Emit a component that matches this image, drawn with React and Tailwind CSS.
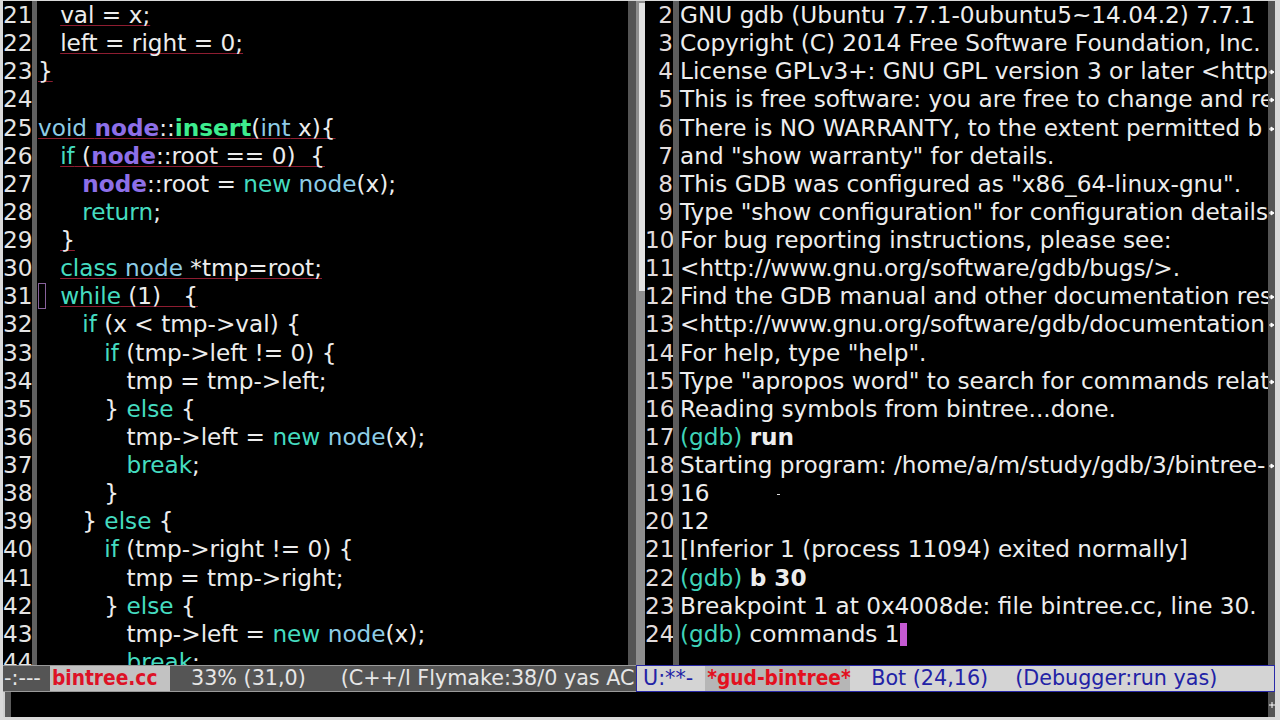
const KW = "text-[#45dcc0]";
const TY = "text-[#8dcce6]";
const NS = "font-bold text-[#8d6fe8]";
const FN = "font-bold text-[#3ded8e]";
const PR = "text-[#3fd3b9]";

// left window: bintree.cc
const code = [
  { n: 21, ind: 1, ul: true, t: [["val = x;"]] },
  { n: 22, ind: 1, ul: true, t: [["left = right = 0;"]] },
  { n: 23, ind: 0, ul: true, t: [["}"]] },
  { n: 24, t: [] },
  { n: 25, ind: 0, ul: true, t: [["void", TY], [" "], ["node", NS], ["::"], ["insert", FN], ["("], ["int", TY], [" x){"]] },
  { n: 26, ind: 1, ul: true, t: [["if", KW], [" ("], ["node", NS], ["::root == 0)  {"]] },
  { n: 27, ind: 2, t: [["node", NS], ["::root = "], ["new", KW], [" "], ["node", TY], ["(x);"]] },
  { n: 28, ind: 2, t: [["return", KW], [";"]] },
  { n: 29, ind: 1, ul: true, t: [["}"]] },
  { n: 30, ind: 1, ul: true, t: [["class", KW], [" "], ["node", TY], [" *tmp=root;"]] },
  { n: 31, ind: 1, ul: true, cursor: true, t: [["while", KW], [" (1)   {"]] },
  { n: 32, ind: 2, t: [["if", KW], [" (x < tmp->val) {"]] },
  { n: 33, ind: 3, t: [["if", KW], [" (tmp->left != 0) {"]] },
  { n: 34, ind: 4, t: [["tmp = tmp->left;"]] },
  { n: 35, ind: 3, t: [["} "], ["else", KW], [" {"]] },
  { n: 36, ind: 4, t: [["tmp->left = "], ["new", KW], [" "], ["node", TY], ["(x);"]] },
  { n: 37, ind: 4, t: [["break", KW], [";"]] },
  { n: 38, ind: 3, t: [["}"]] },
  { n: 39, ind: 2, t: [["} "], ["else", KW], [" {"]] },
  { n: 40, ind: 3, t: [["if", KW], [" (tmp->right != 0) {"]] },
  { n: 41, ind: 4, t: [["tmp = tmp->right;"]] },
  { n: 42, ind: 3, t: [["} "], ["else", KW], [" {"]] },
  { n: 43, ind: 4, t: [["tmp->left = "], ["new", KW], [" "], ["node", TY], ["(x);"]] },
  { n: 44, ind: 4, t: [["break", KW], [";"]] },
];

// right window: *gud-bintree*
const gdb = [
  { n: 2, t: [["GNU gdb (Ubuntu 7.7.1-0ubuntu5~14.04.2) 7.7.1"]] },
  { n: 3, t: [["Copyright (C) 2014 Free Software Foundation, Inc."]] },
  { n: 4, cut: true, t: [["License GPLv3+: GNU GPL version 3 or later <http"]] },
  { n: 5, cut: true, t: [["This is free software: you are free to change and re"]] },
  { n: 6, cut: true, t: [["There is NO WARRANTY, to the extent permitted b"]] },
  { n: 7, t: [['and "show warranty" for details.']] },
  { n: 8, t: [['This GDB was configured as "x86_64-linux-gnu".']] },
  { n: 9, cut: true, t: [['Type "show configuration" for configuration details']] },
  { n: 10, t: [["For bug reporting instructions, please see:"]] },
  { n: 11, t: [["<http://www.gnu.org/software/gdb/bugs/>."]] },
  { n: 12, cut: true, t: [["Find the GDB manual and other documentation res"]] },
  { n: 13, cut: true, t: [["<http://www.gnu.org/software/gdb/documentation"]] },
  { n: 14, t: [['For help, type "help".']] },
  { n: 15, cut: true, t: [['Type "apropos word" to search for commands relat']] },
  { n: 16, t: [["Reading symbols from bintree...done."]] },
  { n: 17, t: [["(gdb)", PR], [" "], ["run", "font-bold"]] },
  { n: 18, cut: true, t: [["Starting program: /home/a/m/study/gdb/3/bintree-"]] },
  { n: 19, speck: true, t: [["16"]] },
  { n: 20, t: [["12"]] },
  { n: 21, t: [["[Inferior 1 (process 11094) exited normally]"]] },
  { n: 22, t: [["(gdb)", PR], [" "], ["b 30", "font-bold"]] },
  { n: 23, t: [["Breakpoint 1 at 0x4008de: file bintree.cc, line 30."]] },
  { n: 24, cursor: true, t: [["(gdb)", PR], [" commands 1"]] },
  { n: "", t: [] },
];

function Segs({ t }) {
  return t.map(([s, c], i) => (
    <span key={i} className={c}>
      {s}
    </span>
  ));
}

function CodeLine({ line }) {
  const indent = "   ".repeat(line.ind || 0);
  return (
    <div className="relative h-[28.14px] whitespace-pre">
      {line.cursor && (
        <span className="absolute left-0 top-[1px] h-[26px] w-[8px] border border-[#87619b]" />
      )}
      {indent}
      <span
        className={
          line.ul
            ? "underline decoration-[#8e1d31] decoration-1 underline-offset-[2px] [text-decoration-skip-ink:none]"
            : ""
        }
      >
        <Segs t={line.t} />
      </span>
    </div>
  );
}

function Arrow() {
  return (
    <svg width="6" height="6" viewBox="0 0 6 6" className="mt-[12px]">
      <path d="M0 3 H3 M2 1 L5 3 L2 5 Z" stroke="#ffffff" strokeWidth="1" fill="#ffffff" />
    </svg>
  );
}

export default function App() {
  return (
    <div className="flex h-[720px] w-[1280px] flex-col overflow-hidden bg-[#d9d9d9] pb-[3px] pl-[3px] pr-[5px] pt-[1px] font-['DejaVu_Sans',sans-serif] text-[23.2px] leading-[28px] text-[#ededed]">
      {/* windows */}
      <div className="flex h-[664px] overflow-hidden bg-black">
        {/* left window */}
        <div className="flex w-[642px] shrink-0">
          <div className="w-[29px] shrink-0 text-right text-[#e4e4e4]">
            {code.map((l) => (
              <div key={l.n} className="h-[28.14px]">{l.n}</div>
            ))}
          </div>
          <div className="w-[5px] shrink-0 bg-[#606060]" />
          <div className="min-w-0 flex-1 overflow-hidden pl-[1px]">
            {code.map((l) => (
              <CodeLine key={l.n} line={l} />
            ))}
          </div>
          <div className="w-[8px] shrink-0 bg-[#545454]" />
          <div className="w-[9px] shrink-0 bg-[#8e8e8e]">
            <div className="ml-[3px] mt-[2px] h-[288px] bg-[#e2e2e2]" />
          </div>
        </div>

        {/* right window */}
        <div className="flex min-w-0 flex-1">
          <div className="w-[28px] shrink-0 text-right text-[#e2dcdc]">
            {gdb.map((l, i) => (
              <div key={i} className="h-[28.14px]">{l.n}</div>
            ))}
          </div>
          <div className="w-[6px] shrink-0 bg-[#5c5c5c]" />
          <div className="min-w-0 flex-1 overflow-hidden pl-[1px]">
            {gdb.map((l, i) => (
              <div key={i} className="h-[28.14px] whitespace-pre">
                <Segs t={l.t} />
                {l.speck && (
                  <span className="ml-[67px] inline-block h-[1px] w-[3px] bg-[#dddddd] align-middle" />
                )}
                {l.cursor && (
                  <span className="inline-block h-[23px] w-[7px] bg-[#c45ad2] align-[-4px]" />
                )}
              </div>
            ))}
          </div>
          <div className="w-[7px] shrink-0 bg-[#545454]">
            {gdb.map((l, i) => (
              <div key={i} className="flex h-[28.14px] justify-center">
                {l.cut && <Arrow />}
              </div>
            ))}
          </div>
        </div>
      </div>

      {/* mode lines */}
      <div className="flex h-[27px] text-[20.7px] leading-[25px]">
        <div className="flex w-[633px] shrink-0 items-center overflow-hidden whitespace-pre border-y border-[#9a9a9a] bg-[#555555] text-[#e6e6e6]">
          <span className="w-[47px] shrink-0 pl-[1px]">-:---</span>
          <span className="w-[120px] shrink-0 bg-[#c2c2c2] pl-[2px] font-['DejaVu_Sans_Condensed','DejaVu_Sans',sans-serif] font-bold text-[#dd1226]">
            bintree.cc
          </span>
          <span className="ml-[21px] shrink-0">33% (31,0)</span>
          <span className="ml-[35px] shrink-0">(C++/l Flymake:38/0 yas AC</span>
        </div>
        <div className="flex min-w-0 flex-1 items-center overflow-hidden whitespace-pre border border-[#2a2aa8] bg-[#d4d4d4] text-[#2222a6]">
          <span className="shrink-0 pl-[6px]">U:**-</span>
          <span className="ml-[12px] w-[145px] shrink-0 bg-[#b6b6b6] pl-[2px] font-['DejaVu_Sans_Condensed','DejaVu_Sans',sans-serif] font-bold text-[#e3101e]">
            *gud-bintree*
          </span>
          <span className="ml-[21px] shrink-0">Bot (24,16)</span>
          <span className="ml-[27px] shrink-0">(Debugger:run yas)</span>
        </div>
      </div>

      {/* minibuffer */}
      <div className="flex flex-1 bg-black">
        <div className="w-[2px] bg-[#d0d0d0]" />
        <div className="w-[6px] bg-[#5a5a5a]" />
        <div className="flex-1" />
        <div className="flex w-[7px] justify-center bg-[#545454]">
          <svg width="6" height="6" viewBox="0 0 6 6" className="mt-[10px]">
            <path d="M3 0 V6 M0 3 H6" stroke="#ffffff" strokeWidth="1" />
          </svg>
        </div>
      </div>
    </div>
  );
}
